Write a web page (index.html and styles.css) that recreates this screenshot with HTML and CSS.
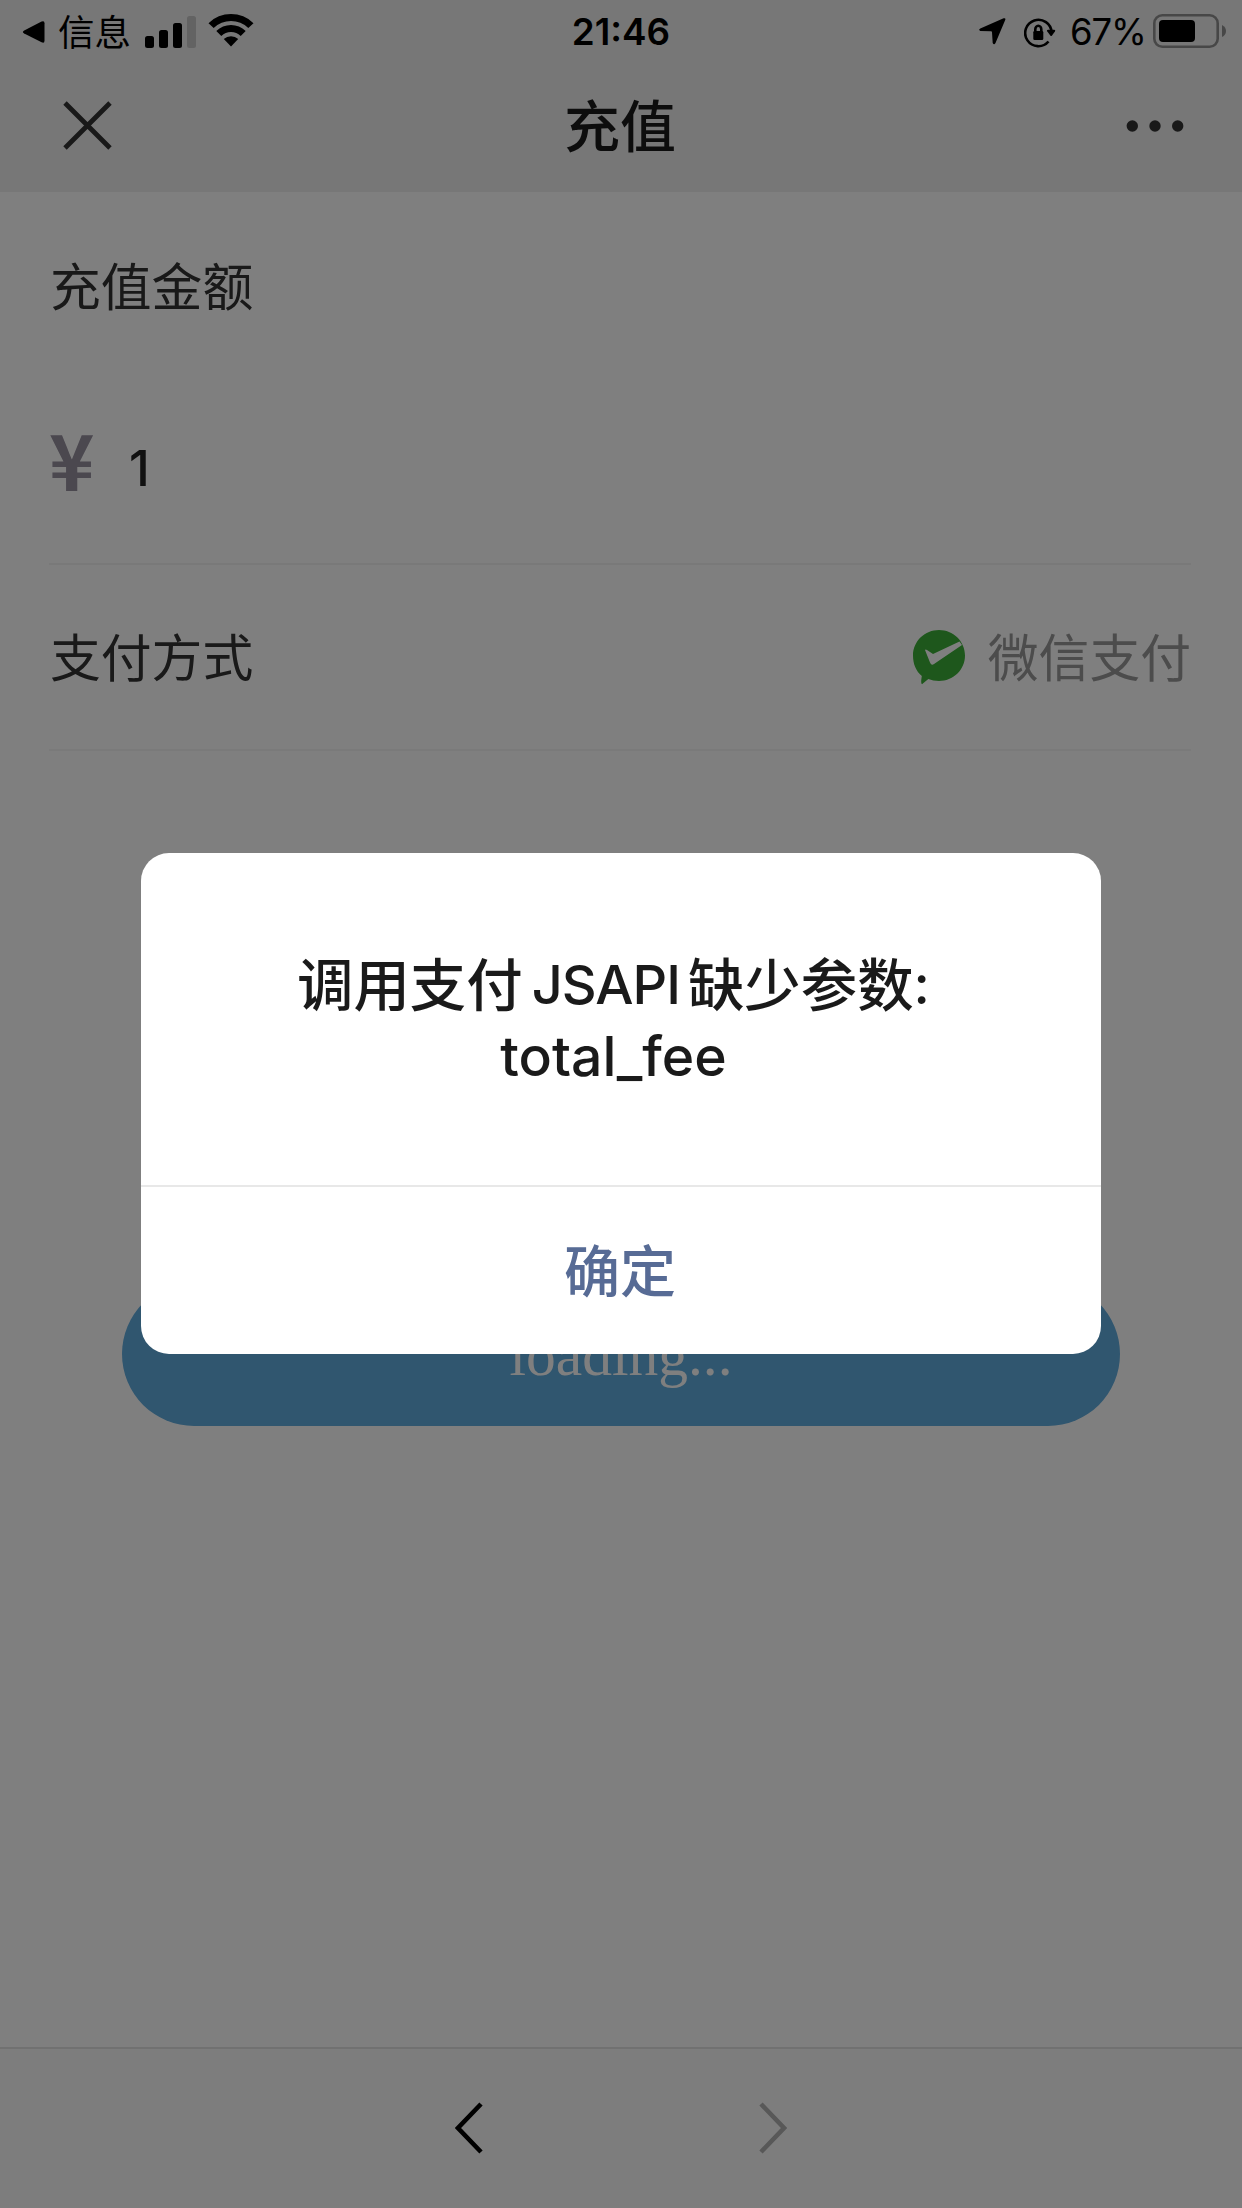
FILE: index.html
```html
<!DOCTYPE html>
<html lang="zh-CN">
<head>
<meta charset="utf-8">
<title>充值</title>
<link rel="stylesheet" href="styles.css">
</head>
<body>
<div class="screen">
  <header class="top">
    <div class="status">
      <div class="status-left">
        <svg class="back-app" width="24" height="24" viewBox="0 0 24 24"><path d="M2.2 10.6 19.6 1.6Q22.5.3 22.5 3.2V20.8Q22.5 23.7 19.6 22.3L2.2 13.4Q-.4 12 2.2 10.6Z"/></svg>
        <span class="app-name">信息</span>
        <svg class="signal" width="51" height="32" viewBox="0 0 51 32"><rect y="20" width="9" height="12" rx="2.5"/><rect x="14" y="14" width="9" height="18" rx="2.5"/><rect x="28" y="7" width="9" height="25" rx="2.5"/><rect class="faint" x="42" width="9" height="32" rx="2.5"/></svg>
        <svg class="wifi" width="46" height="34" viewBox="0 0 46 34"><path d="M.5 10.2A32 32 0 0 1 45.5 10.2L40.3 15A25 25 0 0 0 5.700 15Z"/><path d="M8.300 18A21 21 0 0 1 37.700 18L32.700 23A14 14 0 0 0 13.300 23Z"/><path d="M15.800 26A10.500 10.500 0 0 1 30.200 26L23 33.500Z"/></svg>
      </div>
      <span class="time">21:46</span>
      <div class="status-right">
        <svg width="27" height="27" viewBox="0 0 27 27"><path d="M24.600.3Q27-.4 26.200 2L16.500 25Q15 27.500 13.700 25L13 14.200Q13 13.300 12 13.300L1.300 13Q-1 11.800 1.300 10.500Z"/></svg>
        <svg class="lock" width="32" height="30" viewBox="0 0 32 30"><path class="ring" d="M27.600 14.500A13.200 13.200 0 1 0 24.500 23.500"/><path d="M23.300 13.400Q22.200 11.800 24 11.800H30.200Q32 11.800 30.900 13.400L28 17.600Q27.100 18.600 26.300 17.600Z"/><rect x="9.300" y="13" width="10" height="9" rx="1.300"/><path class="shackle" d="M11.300 13.500V11.300A3 3.600 0 0 1 17.300 11.300V13.500"/></svg>
        <span class="percent">67%</span>
        <svg class="battery" width="74" height="34" viewBox="0 0 74 34"><rect class="case" x="1.300" y="1.300" width="63.400" height="31.400" rx="8"/><rect x="6" y="6" width="36" height="22" rx="4"/><path class="cap" d="M69 11Q73 13 73 17T69 23Z"/></svg>
      </div>
    </div>
    <nav class="nav">
      <svg width="49" height="49" viewBox="0 0 49 49"><path class="line" d="M2 2 47 47M47 2 2 47"/></svg>
      <h1 class="nav-title">充值</h1>
      <svg class="more" width="58" height="12" viewBox="0 0 58 12"><circle cx="6.300" cy="6" r="5.700"/><circle cx="29" cy="6" r="5.700"/><circle cx="51.700" cy="6" r="5.700"/></svg>
    </nav>
  </header>
  <main class="content">
    <div class="label-row">充值金额</div>
    <div class="amount-row"><span class="yen">¥</span><span class="amount">1</span></div>
    <div class="method-row">
      <span>支付方式</span>
      <span class="method">
        <svg class="wechat" width="52" height="55" viewBox="0 0 52 55"><path class="bubble" d="M26 0C40 0 52 11 52 25.500S40 51 26 51Q20 51 15.300 49L9 54.200Q7.500 54 8.800 46C3 41 0 34 0 25.500 0 11 12 0 26 0Z"/><path class="tick" d="M12 20Q12.500 19 14 20L20 24 46.500 11.500 49 15 21 34Q18.500 36 17 32.500Z"/></svg>
        <span>微信支付</span>
      </span>
    </div>
    <button class="pay">loading...</button>
  </main>
  <footer class="toolbar">
    <svg width="28" height="52" viewBox="0 0 28 52"><path class="arrow" d="M26 2 3 26 26 50"/></svg>
    <svg width="28" height="52" viewBox="0 0 28 52"><path class="arrow off" d="M2 2 25 26 2 50"/></svg>
  </footer>
</div>
<div class="mask">
  <div class="dialog">
    <div class="message">
      <div>调用支付<span class="latin api">JSAPI</span>缺少参数<span class="latin">:</span></div>
      <div class="latin fee">total_fee</div>
    </div>
    <div class="confirm">确定</div>
  </div>
</div>
</body>
</html>
```
FILE: styles.css
```css
* { box-sizing: border-box; margin: 0; padding: 0; }
body { font-family: Inter, "Noto Sans CJK SC", sans-serif; color: #333; background: #fff; }
svg { display: block; flex: none; }
.screen { width: 1242px; height: 2208px; display: flex; flex-direction: column; }
.top { height: 192px; background: #eee; flex: none; }
.status { height: 62px; display: grid; grid-template-columns: 1fr auto 1fr; color: #000; font-size: 36px; line-height: 62px; }
.status-left, .status-right { display: flex; align-items: center; }
.status-left { padding-left: 22px; }
.app-name { margin: -2px 0 0 12px; width: 76px; font-size: 36.500px; font-family: "Noto Sans CJK SC", sans-serif; }
.signal { margin: 0 12px 0 11px; }
.wifi { margin-top: -3px; }
.faint { opacity: .17; }
.time { font-weight: 600; font-size: 36.800px; padding-top: 1px; }
.status-right { justify-content: flex-end; padding-right: 15px; }
.lock { margin: 2px 14px 0 18px; }
.ring, .shackle { fill: none; stroke: #000; stroke-width: 2.600; }
.percent { width: 75px; margin-right: 8px; padding-top: 1px; font-size: 36.500px; letter-spacing: -1.200px; }
.battery { margin-top: -2px; }
.case { fill: none; stroke: #000; stroke-opacity: .4; stroke-width: 2.600; }
.cap { opacity: .4; }
.nav { height: 126px; display: grid; grid-template-columns: 1fr auto 1fr; align-items: center; padding: 0 58px 0 63px; color: #1a1a1a; }
.nav-title { font-size: 56px; line-height: 80px; padding-top: 4px; margin-right: 7px; font-weight: 500; }
.line { fill: none; stroke: #333; stroke-width: 4.800; }
.more { justify-self: end; fill: #333; margin-top: 1px; }
.content { flex: 1; padding: 0 51px 0 49px; font-size: 50.800px; line-height: 74px; }
.label-row { padding: 59px 0 0 1px; height: 188px; }
.amount-row { height: 185px; border-bottom: 2px solid #f2f2f2; display: flex; align-items: center; padding-bottom: 14px; }
.yen { font: 700 77px/80px "Noto Sans CJK SC", sans-serif; color: #96909f; width: 80px; margin-top: -14px; }
.amount { font-weight: 500; font-size: 50px; padding-top: 7px; color: #222; }
.method-row { height: 186px; padding: 4px 0 0 1px; border-bottom: 2px solid #f5f5f5; display: flex; align-items: center; justify-content: space-between; }
.method { display: flex; align-items: center; gap: 23px; color: #999; }
.wechat { margin-top: -4px; }
.bubble { fill: #3caf38; }
.tick { fill: #fff; }
.pay { display: block; width: 998px; height: 144px; margin: 531px 0 0 73px; border: 0; border-radius: 72px; background: #60acde; color: #fff; font: 59.500px/144px "Liberation Serif", serif; padding-top: 1px; }
.toolbar { height: 161px; background: #fbfbfb; border-top: 2px solid #e3e3e3; display: flex; align-items: center; justify-content: center; gap: 276px; padding-bottom: 2px; }
.arrow { fill: none; stroke: #000; stroke-width: 4.600; }
.arrow.off { stroke: #b0b0b0; }
.mask { position: fixed; inset: 0; background: rgba(0,0,0,.5); display: flex; justify-content: center; padding-top: 853px; }
.dialog { width: 960px; height: 501px; border-radius: 28px; background: #fff; color: #1a1a1a; font-weight: 500; overflow: hidden; }
.message { height: 332px; padding: 93px 15px 0 0; text-align: center; font-size: 56.400px; line-height: 72px; white-space: nowrap; }
.message, .confirm { font-family: "Noto Sans CJK SC", sans-serif; }
.latin { font-family: Inter, sans-serif; font-size: 54px; }
.message span.latin { line-height: 1; position: relative; top: -2px; }
.api { margin: 0 8px 0 9px; letter-spacing: -1px; }
.fee { font-size: 55.300px; margin-top: 2px; }
.confirm { height: 169px; border-top: 2px solid #e8e8e8; color: #576b95; text-align: center; font-size: 56px; line-height: 162px; padding-right: 2px; }
```
